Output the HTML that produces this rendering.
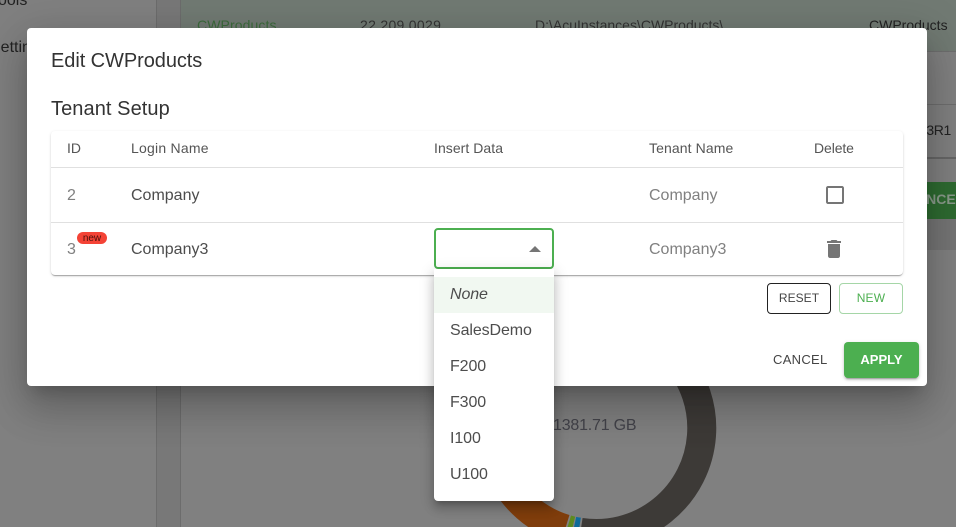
<!DOCTYPE html>
<html><head><meta charset="utf-8"><style>
html,body{margin:0;padding:0;width:956px;height:527px;overflow:hidden;background:#808080}
body{position:relative;font-family:"Liberation Sans",sans-serif}
.a{position:absolute;white-space:nowrap}
.t{position:absolute;white-space:nowrap;line-height:20px;height:20px}
.h{font-size:14px;color:#555}
.r{font-size:16px;color:#4c4c4c}
.g{font-size:16px;color:#808080}
.m{font-size:16px;color:#4d4d4d;position:absolute;left:16px;line-height:20px;white-space:nowrap;letter-spacing:-.1px}
</style></head><body>
<div class="a" style="left:181px;top:0;width:775px;height:51px;background:#717a73"></div>
<div class="a" style="left:181px;top:51px;width:775px;height:1px;background:#6e6e6e"></div>
<div class="a" style="left:181px;top:104px;width:775px;height:1px;background:#6e6e6e"></div>
<div class="a" style="left:181px;top:157px;width:775px;height:2px;background:#666"></div>
<div class="a" style="left:181px;top:219px;width:775px;height:31px;background:#757575"></div>
<div class="a" style="left:157px;top:0;width:23px;height:527px;background:#787878"></div>
<div class="a" style="left:156px;top:0;width:1px;height:527px;background:#6c6c6c"></div>
<div class="a" style="left:180px;top:0;width:1px;height:527px;background:#6c6c6c"></div>
<div class="t" style="left:197px;top:15px;font-size:14px;color:#3c6b3c;letter-spacing:.1px">CWProducts</div>
<div class="t" style="left:360px;top:15px;font-size:14px;color:#333;letter-spacing:.3px">22.209.0029</div>
<div class="t" style="left:535px;top:15px;font-size:14px;color:#333">D:\AcuInstances\CWProducts\</div>
<div class="t" style="left:869px;top:15px;font-size:14px;color:#222">CWProducts</div>
<div class="t" style="left:-10px;top:-9px;font-size:16px;color:#222">Tools</div>
<div class="t" style="left:-10px;top:38px;font-size:16px;color:#222">Settings</div>
<div class="t" style="left:919px;top:120px;font-size:14px;color:#222;letter-spacing:-.4px">23R1</div>
<div class="a" style="left:880px;top:182px;width:76px;height:37px;background:#2e6b31"></div>
<div class="t" style="left:916px;top:189px;font-size:14px;font-weight:bold;color:#8a9a8b">ANCE</div>
<svg class="a" style="left:0;top:0" width="956" height="527" viewBox="0 0 956 527" fill="none" stroke-width="29">
<path d="M580.4 532.3A105.5 105.5 0 1 0 596 322.5" stroke="#3d3a37"/>
<path d="M578.6 532A105.5 105.5 0 0 1 573.2 531" stroke="#0f6b9a"/>
<path d="M571.7 530.7A105.5 105.5 0 0 1 566.9 529.4" stroke="#5d8a1e"/>
<path d="M565.2 528.9A105.5 105.5 0 0 1 504.6 375.3" stroke="#7f3d0c"/>
</svg>
<div class="t" style="left:553px;top:416px;font-size:16px;color:#43434a;letter-spacing:-.2px">1381.71 GB</div>

<div class="a" style="left:27px;top:28px;width:900px;height:358px;background:#fff;border-radius:4px;box-shadow:0 11px 15px -7px rgba(0,0,0,.2),0 24px 38px 3px rgba(0,0,0,.14),0 9px 46px 8px rgba(0,0,0,.12)"></div>
<div class="t" style="left:51px;top:51px;font-size:20px;color:#333;letter-spacing:-.07px">Edit CWProducts</div>
<div class="t" style="left:51px;top:99px;font-size:20px;color:#333;letter-spacing:.08px">Tenant Setup</div>
<div class="a" style="left:51px;top:131px;width:852px;height:144px;background:#fff;border-radius:4px;box-shadow:0 2px 1px -1px rgba(0,0,0,.2),0 1px 1px rgba(0,0,0,.14),0 1px 3px rgba(0,0,0,.12)"></div>
<div class="a" style="left:51px;top:167px;width:852px;height:1px;background:#e0e0e0"></div>
<div class="a" style="left:51px;top:222px;width:852px;height:1px;background:#e0e0e0"></div>
<div class="t h" style="left:67px;top:138px">ID</div>
<div class="t h" style="left:131px;top:138px;letter-spacing:.23px">Login Name</div>
<div class="t h" style="left:434px;top:138px;letter-spacing:.05px">Insert Data</div>
<div class="t h" style="left:649px;top:138px;letter-spacing:.1px">Tenant Name</div>
<div class="t h" style="left:814px;top:138px;letter-spacing:-.1px">Delete</div>
<div class="t g" style="left:67px;top:186px">2</div>
<div class="t r" style="left:131px;top:186px">Company</div>
<div class="t g" style="left:649px;top:186px">Company</div>
<svg class="a" style="left:823px;top:183px" width="24" height="24" viewBox="0 0 24 24"><path fill="#757575" d="M19 5v14H5V5h14m0-2H5c-1.1 0-2 .9-2 2v14c0 1.1.9 2 2 2h14c1.1 0 2-.9 2-2V5c0-1.1-.9-2-2-2z"/></svg>
<div class="t g" style="left:67px;top:240px">3</div>
<div class="a" style="left:77px;top:232px;width:30px;height:12px;border-radius:6px;background:#f44336;color:#4a0f0a;font-size:10px;line-height:13px;text-align:center">new</div>
<div class="t r" style="left:131px;top:240px">Company3</div>
<div class="a" style="left:434px;top:228px;width:116px;height:37px;border:2px solid #4caf50;border-radius:4px;background:#fff"></div>
<div class="a" style="left:529px;top:246px;width:0;height:0;border-left:6px solid transparent;border-right:6px solid transparent;border-bottom:6px solid #757575"></div>
<div class="t g" style="left:649px;top:240px">Company3</div>
<svg class="a" style="left:822px;top:237px" width="24" height="24" viewBox="0 0 24 24"><path fill="#757575" d="M6 19c0 1.100.9 2 2 2h8c1.100 0 2-.9 2-2V7H6v12zM19 4h-3.500l-1-1h-5l-1 1H5v2h14V4z"/></svg>
<div class="a" style="left:767px;top:283px;width:62px;height:29px;border:1px solid #222;border-radius:4px;font-size:12px;line-height:29px;text-align:center;color:#444;letter-spacing:.05px">RESET</div>
<div class="a" style="left:839px;top:283px;width:62px;height:29px;border:1px solid #a5d6a7;border-radius:4px;font-size:12px;line-height:29px;text-align:center;color:#4caf50;letter-spacing:.2px">NEW</div>
<div class="t" style="left:773px;top:350px;font-size:13px;color:#444;letter-spacing:.3px">CANCEL</div>
<div class="a" style="left:844px;top:342px;width:75px;height:36px;background:#4caf50;border-radius:4px;color:#fff;font-size:13px;font-weight:bold;line-height:35px;text-align:center;box-shadow:0 3px 1px -2px rgba(0,0,0,.2),0 2px 2px rgba(0,0,0,.14),0 1px 5px rgba(0,0,0,.12)">APPLY</div>

<div class="a" style="left:434px;top:269px;width:120px;height:232px;background:#fff;border-radius:0 0 4px 4px;box-shadow:0 5px 5px -3px rgba(0,0,0,.2),0 8px 10px 1px rgba(0,0,0,.14),0 3px 14px 2px rgba(0,0,0,.12)">
<div class="a" style="left:0;top:8px;width:120px;height:36px;background:#f1f8f1"></div>
<div class="m" style="top:16px;font-style:italic">None</div>
<div class="m" style="top:52px">SalesDemo</div>
<div class="m" style="top:88px">F200</div>
<div class="m" style="top:124px">F300</div>
<div class="m" style="top:160px">I100</div>
<div class="m" style="top:196px">U100</div>
</div>
</body></html>
